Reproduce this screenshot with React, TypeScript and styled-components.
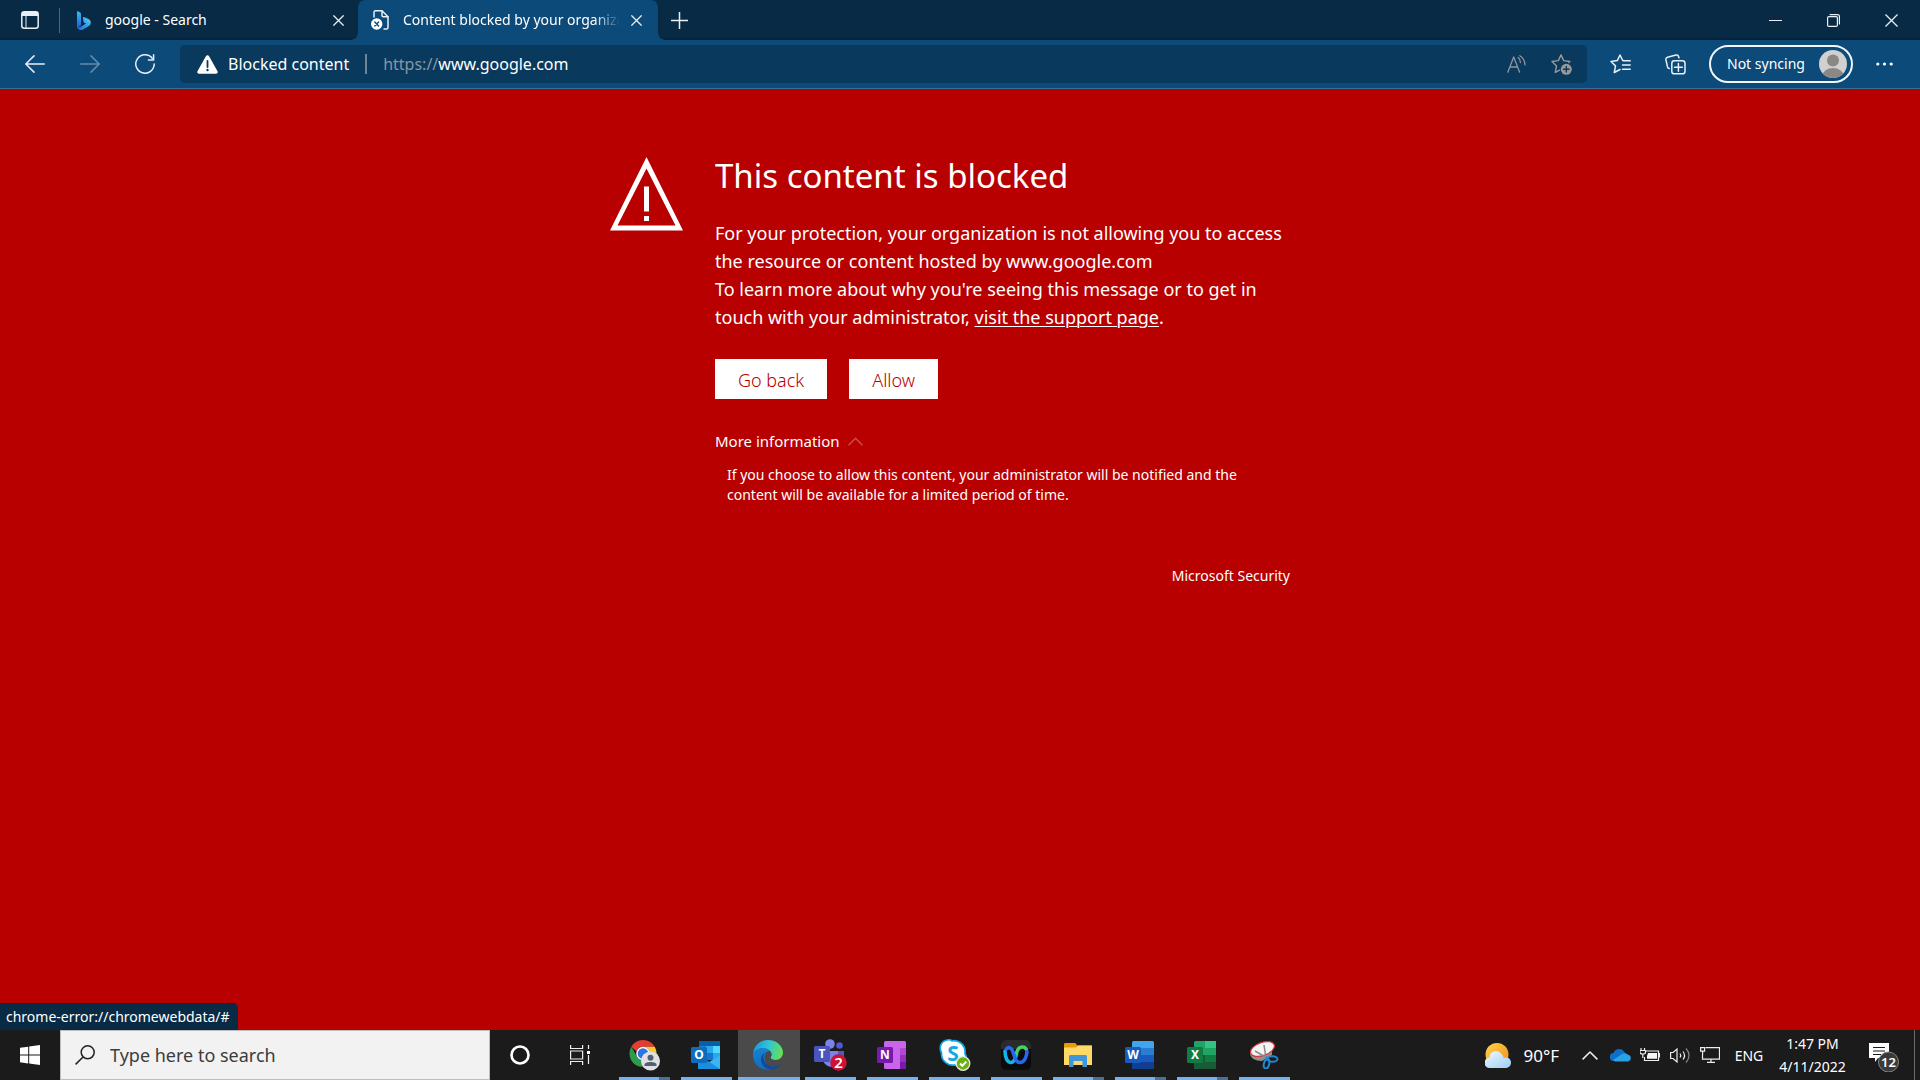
import React, { useState } from "react";
import styled, { createGlobalStyle, css } from "styled-components";

const color = {
  frame: "#082a45",
  toolbar: "#0c4a7a",
  field: "#0a395e",
  line: "#3a6e95",
  danger: "#b80000",
  taskbar: "#1b1b1b",
  underline: "#76b2ea",
};

const GlobalStyle = createGlobalStyle`
  *, *::before, *::after { box-sizing: border-box; }
  html, body { margin: 0; }
  body {
    background: ${color.danger};
    color: #fff;
    font-family: "Noto Sans", "Open Sans", sans-serif;
    font-size: 14px;
  }
  button, input { font: inherit; color: inherit; }
  svg { display: block; flex: none; }
`;

const Screen = styled.div`
  display: flex;
  flex-direction: column;
  min-height: 100vh;
`;

const PlainButton = styled.button`
  display: flex;
  align-items: center;
  justify-content: center;
  flex: none;
  padding: 0;
  border: 0;
  background: none;
  cursor: pointer;
`;

/* ---------- Title bar ---------- */

const TitleBar = styled.header`
  display: flex;
  height: 40px;
  background: ${color.frame};
  box-shadow: inset 0 -2px 2px -1px rgba(0, 0, 0, 0.35);
`;

const TabActions = styled(PlainButton)`
  width: 60px;
  position: relative;
  &::after {
    content: "";
    position: absolute;
    right: 0;
    top: 8px;
    width: 1px;
    height: 25px;
    background: #4d6579;
  }
`;

const Tabs = styled.div`
  display: flex;
`;

const Tab = styled.div<{ $active?: boolean }>`
  position: relative;
  display: flex;
  align-items: center;
  width: ${(p) => (p.$active ? 300 : 298)}px;
  padding: ${(p) => (p.$active ? "0 10px 0 13px" : "0 8px 0 17px")};
  ${(p) =>
    p.$active &&
    css`
      background: ${color.toolbar};
      border-radius: 7px 7px 0 0;
      &::before,
      &::after {
        content: "";
        position: absolute;
        bottom: 0;
        width: 6px;
        height: 6px;
      }
      &::before {
        right: 100%;
        background: radial-gradient(circle at 0 0, transparent 5px, ${color.toolbar} 6px);
      }
      &::after {
        left: 100%;
        background: radial-gradient(circle at 100% 0, transparent 5px, ${color.toolbar} 6px);
      }
    `}
`;

const TabLabel = styled(PlainButton)<{ $fade?: boolean }>`
  flex: 1;
  min-width: 0;
  justify-content: flex-start;
  gap: 14px;
  height: 40px;
  overflow: hidden;
  white-space: nowrap;
  line-height: 20px;
  ${(p) =>
    p.$fade &&
    css`
      mask-image: linear-gradient(to left, transparent 2px, #000 28px);
    `}
`;

const TabClose = styled(PlainButton)`
  width: 24px;
  height: 24px;
  margin-left: 2px;
`;

const NewTab = styled(PlainButton)`
  width: 42px;
`;

const WindowControls = styled.div`
  display: flex;
  margin-left: auto;
`;

const WindowButton = styled(PlainButton)`
  width: 58px;
`;

/* ---------- Toolbar ---------- */

const Toolbar = styled.nav`
  display: flex;
  align-items: center;
  height: 49px;
  padding: 0 8px 0 7px;
  background: ${color.toolbar};
  border-bottom: 1px solid ${color.line};
`;

const NavButton = styled(PlainButton)`
  width: 55px;
  height: 38px;
`;

const AddressBar = styled.div`
  display: flex;
  flex: 1;
  align-items: center;
  height: 38px;
  margin: 0 6px 0 8px;
  padding: 0 3px 0 17px;
  border-radius: 5px;
  background: ${color.field};
  font-size: 16px;
  line-height: 24px;
`;

const SiteState = styled(PlainButton)`
  gap: 10px;
  padding-right: 16px;
`;

const Scheme = styled.label`
  margin-left: 16px;
  color: #8796a3;
`;

const FieldRule = styled.span`
  width: 2px;
  height: 20px;
  background: #6f8699;
`;

const UrlInput = styled.input`
  flex: 1;
  min-width: 0;
  padding: 0;
  border: 0;
  outline: 0;
  background: none;
`;

const FieldButton = styled(PlainButton)`
  width: 45px;
  height: 38px;
`;

const Profile = styled(PlainButton)`
  height: 38px;
  width: 144px;
  padding: 0 4px 0 16px;
  margin: 0 4px 0 6px;
  justify-content: space-between;
  border: 2px solid #f2f6fa;
  border-radius: 19px;
  line-height: 20px;
`;

/* ---------- Blocked page ---------- */

const Page = styled.main`
  flex: 1;
  display: flex;
  flex-direction: column;
  padding-top: 64px;
  background: ${color.danger};
`;

const Notice = styled.section`
  display: grid;
  grid-template-columns: 73px 1fr;
  column-gap: 32px;
  width: 100%;
  max-width: 700px;
  margin: 0 auto;
  svg.warn {
    margin-top: 4px;
  }
`;

const Title = styled.h1`
  margin: 0 0 20px;
  font-size: 33px;
  font-weight: 400;
  line-height: 46px;
`;

const Lead = styled.p`
  margin: 0;
  font-size: 18px;
  line-height: 28px;
`;

const SupportLink = styled.a`
  color: inherit;
  text-underline-offset: 2px;
  text-decoration-thickness: 1px;
`;

const Actions = styled.div`
  display: flex;
  gap: 22px;
  margin: 28px 0 30px;
`;

const ActionButton = styled.button`
  height: 40px;
  padding: 1px 23px 0;
  border: 0;
  background: #fff;
  color: ${color.danger};
  font-size: 18px;
  font-weight: 300;
  line-height: 28px;
  cursor: pointer;
`;

const MoreButton = styled(PlainButton)`
  gap: 8px;
  font-size: 15px;
  line-height: 24px;
`;

const Detail = styled.p`
  margin: 12px 48px 0 12px;
  line-height: 20px;
`;

const Brand = styled.p`
  margin: 61px 20px 0 0;
  line-height: 20px;
  text-align: right;
`;

const StatusBubble = styled.output`
  align-self: flex-start;
  margin-top: auto;
  height: 27px;
  padding: 0 8px 0 6px;
  border-radius: 0 5px 0 0;
  background: ${color.frame};
  line-height: 28px;
`;

/* ---------- Taskbar ---------- */

const Taskbar = styled.footer`
  display: flex;
  height: 50px;
  background: ${color.taskbar};
`;

const SystemButton = styled(PlainButton)`
  width: 60px;
`;

const SearchBox = styled.label`
  display: flex;
  align-items: center;
  gap: 15px;
  width: 430px;
  padding-left: 14px;
  border: 1px solid #bdbdbd;
  background: #f2f2f2;
  color: #333;
`;

const SearchInput = styled.input`
  flex: 1;
  min-width: 0;
  padding: 0;
  border: 0;
  outline: 0;
  background: none;
  font-size: 18px;
  line-height: 24px;
  &::placeholder {
    color: #3c3c3c;
    opacity: 1;
  }
`;

const Apps = styled.div`
  display: flex;
  margin-left: 4px;
`;

const AppButton = styled(PlainButton)<{ $active?: boolean; $stacked?: boolean }>`
  position: relative;
  width: 62px;
  padding-right: 2px;
  ${(p) =>
    p.$active &&
    css`
      background: #4a4a4a;
    `}
  &::after {
    content: "";
    position: absolute;
    bottom: 0;
    left: ${(p) => (p.$active ? 0 : 5)}px;
    right: ${(p) => (p.$active ? 0 : 6)}px;
    height: 3px;
    background: ${(p) =>
      p.$stacked
        ? `linear-gradient(to right, ${color.underline} 40px, #4a7096 40px)`
        : color.underline};
  }
`;

const Tray = styled.div`
  display: flex;
  align-items: center;
  margin-left: auto;
  font-size: 14px;
  line-height: 23px;
`;

const Weather = styled(PlainButton)`
  gap: 12px;
  margin-right: 16px;
  font-size: 17px;
`;

const TrayButton = styled(PlainButton)`
  width: 30px;
  height: 50px;
`;

const Language = styled(PlainButton)`
  width: 48px;
`;

const Clock = styled.time`
  width: 79px;
  text-align: center;
`;

const Notifications = styled(PlainButton)`
  width: 63px;
  height: 50px;
  border-right: 1px solid #6a6a6a;
  margin-right: 5px;
`;

/* ---------- Icons ---------- */

const stroke = {
  fill: "none",
  stroke: "#e9eff5",
  strokeWidth: 1.5,
  strokeLinecap: "round" as const,
  strokeLinejoin: "round" as const,
};

const CrossIcon = ({ size = 11, thin = false }: { size?: number; thin?: boolean }) => (
  <svg width={size} height={size} viewBox="0 0 11 11" {...stroke} strokeWidth={thin ? 1.1 : 1.3} strokeLinecap="butt">
    <path d="M.4.4l10.2 10.2M10.6.4L.4 10.6" />
  </svg>
);

const TabActionsIcon = () => (
  <svg width="18" height="18" viewBox="0 0 18 18" {...stroke}>
    <rect x=".8" y=".8" width="16.4" height="16.4" rx="2.5" />
    <path d="M1 3h16" strokeWidth="4" strokeLinecap="butt" />
    <path d="M5 5v12" strokeWidth="1" />
  </svg>
);

const BingIcon = () => (
  <svg width="14" height="19" viewBox="0 0 14 19">
    <defs>
      <linearGradient id="bingStem" x1="0" y1="0" x2="0" y2="1">
        <stop offset="0" stopColor="#35c3f3" />
        <stop offset="1" stopColor="#1b5fd9" />
      </linearGradient>
      <linearGradient id="bingBowl" x1="0" y1="1" x2="1" y2="0">
        <stop offset="0" stopColor="#1e5fe0" />
        <stop offset="1" stopColor="#4fd8f0" />
      </linearGradient>
    </defs>
    <path d="M0 .8C0 .2.5 0 1 .3l2.4 1.5c.4.3.6.7.6 1.2v11.6L0 16.600z" fill="url(#bingStem)" />
    <path d="M6 7c-.3-.7.2-1.200.9-.9l4.600 2c1.500.700 2.300 2 2.300 3.400 0 1.600-.8 2.800-2 3.500l-5.600 3.400c-2.600 1.300-6.200.1-6.200-3.200 1 1.400 2.900 1.200 4.200.4l4.900-3-1.600-.7c-.5-.2-.8-.5-1-1z" fill="url(#bingBowl)" />
  </svg>
);

const BlockedPageIcon = () => (
  <svg width="18" height="20" viewBox="0 0 18 20" {...stroke}>
    <path d="M3 7V2.500C3 1.500 3.600.8 4.600.8H11l6 6v10.600c0 1-.7 1.700-1.700 1.700H13" />
    <path d="M11 1v4.500c0 .8.500 1.300 1.300 1.300H17" />
    <circle cx="5.700" cy="14" r="5.700" fill="#fff" stroke="none" />
    <path d="M3.800 12.100l3.800 3.800m0-3.800l-3.800 3.800" stroke="#0c4a7a" strokeWidth="1.400" />
  </svg>
);

const PlusIcon = () => (
  <svg width="17" height="17" viewBox="0 0 17 17" {...stroke} strokeLinecap="butt">
    <path d="M8.500 0v17M0 8.500h17" />
  </svg>
);

const MinimizeIcon = () => (
  <svg width="13" height="13" viewBox="0 0 13 13" {...stroke} strokeWidth="1" strokeLinecap="butt">
    <path d="M0 6.500h13" />
  </svg>
);

const RestoreIcon = () => (
  <svg width="13" height="13" viewBox="0 0 13 13" {...stroke} strokeWidth="1.200">
    <rect x=".6" y="2.600" width="9.800" height="9.800" rx="1.200" />
    <path d="M3 .6h7.500c1.200 0 1.900.8 1.900 1.900V10" />
  </svg>
);

const ArrowIcon = ({ forward = false }: { forward?: boolean }) => (
  <svg width="20" height="18" viewBox="0 0 20 18" {...stroke} opacity={forward ? 0.4 : 1}>
    <path d={forward ? "M.8 9h18M11 .9L19.200 9 11 17.100" : "M19.200 9H1M9 .9L.8 9 9 17.100"} />
  </svg>
);

const RefreshIcon = () => (
  <svg width="20" height="20" viewBox="0 0 20 20" {...stroke}>
    <path d="M17.200 4.300A9.200 9.200 0 1 0 19.200 10" />
    <path d="M18.600.8v5.200h-5.200" />
  </svg>
);

const SolidWarningIcon = () => (
  <svg width="21" height="19" viewBox="0 0 21 19">
    <path d="M8.900 1.200c.7-1.300 2.500-1.300 3.200 0l8.400 15c.7 1.200-.2 2.600-1.500 2.600H2c-1.300 0-2.200-1.400-1.500-2.600z" fill="#fff" />
    <path d="M10.500 6v6" stroke="#0a395e" strokeWidth="1.800" strokeLinecap="round" />
    <circle cx="10.500" cy="15" r="1.200" fill="#0a395e" />
  </svg>
);

const ReadAloudIcon = () => (
  <svg width="19" height="18" viewBox="0 0 19 18" {...stroke} stroke="#8d979f" strokeWidth="1.300">
    <path d="M.8 17.200L6.700 2l5.900 15.200M2.800 12h7.800" />
    <path d="M11.200 2.600c1.400 1.100 2.200 2.900 2.200 4.900M12.800.8c3 1.900 5 5.200 5.200 9" />
  </svg>
);

const AddFavoriteIcon = () => (
  <svg width="21" height="21" viewBox="0 0 21 21" {...stroke} stroke="#999" strokeWidth="1.400">
    <path d="M17.800 8.500l1-1-6.100-.9L10 .9 7.300 6.600 1 7.500l4.500 4.400-1.200 6.500 4.200-2.300" />
    <circle cx="15.300" cy="15.300" r="5.500" fill="#999" stroke="none" />
    <path d="M15.300 12.500v5.600M12.500 15.300h5.600" stroke="#0a395e" />
  </svg>
);

const FavoritesIcon = () => (
  <svg width="21" height="20" viewBox="0 0 21 20" {...stroke}>
    <path d="M13.400 6.500h-.7L10 1 7.300 6.600 1 7.500l4.500 4.400-1.200 6.600 5.700-3" />
    <path d="M13.500 6.700h6.700M12.500 11h7.700M12.500 15.300h7.700" />
  </svg>
);

const CollectionsIcon = () => (
  <svg width="21" height="21" viewBox="0 0 21 21" {...stroke}>
    <rect x="6.800" y="6.800" width="13.200" height="13" rx="2.600" />
    <path d="M13.400 9.500v7.700M9.500 13.300h7.800" />
    <path d="M4.300 14.500c-1-.2-1.500-.7-1.800-1.600L.9 5.700C.7 4.500 1.300 3.500 2.500 3.200L11 1c1.300-.3 2.300.4 2.600 1.500l.3 1.300" />
  </svg>
);

const AvatarIcon = () => (
  <svg width="28" height="28" viewBox="0 0 28 28">
    <clipPath id="avatarClip"><circle cx="14" cy="14" r="14" /></clipPath>
    <g clipPath="url(#avatarClip)">
      <rect width="28" height="28" fill="#d0d0d0" />
      <circle cx="14" cy="10.500" r="6" fill="#8b8784" />
      <ellipse cx="14" cy="26" rx="10.500" ry="8" fill="#8b8784" />
    </g>
  </svg>
);

const EllipsisIcon = () => (
  <svg width="17" height="4" viewBox="0 0 17 4" fill="#fff">
    <circle cx="1.800" cy="2" r="1.600" /><circle cx="8.500" cy="2" r="1.600" /><circle cx="15.200" cy="2" r="1.600" />
  </svg>
);

const WarningIcon = () => (
  <svg className="warn" width="73" height="74" viewBox="0 0 73 74" fill="#fff">
    <path fillRule="evenodd" d="M36.500 0L73 73.500H0zM36.500 11.500L7.500 68.500h58z" />
    <path d="M34 29.500h5v25h-5zM34 59h5v5h-5z" />
  </svg>
);

const ChevronUp = ({ width, height, tint }: { width: number; height: number; tint: string }) => (
  <svg width={width} height={height} viewBox="0 0 16 9" {...stroke} stroke={tint} strokeLinecap="butt">
    <path d="M.6 8.400L8 1l7.400 7.400" />
  </svg>
);

const WindowsIcon = () => (
  <svg width="20" height="20" viewBox="0 0 20 20" fill="#fff">
    <path d="M0 2.800L8.200 1.700v7.800H0zM9.200 1.500L20 0v9.500H9.200zM0 10.500h8.200v7.900L0 17.200zM9.200 10.500H20V20L9.200 18.500z" />
  </svg>
);

const SearchIcon = () => (
  <svg width="20" height="20" viewBox="0 0 20 20" fill="none" stroke="#222" strokeWidth="1.500">
    <circle cx="12.700" cy="7.300" r="6.500" /><path d="M8 12L.6 19.400" />
  </svg>
);

const CortanaIcon = () => (
  <svg width="20" height="20" viewBox="0 0 20 20" fill="none" stroke="#fff" strokeWidth="2.600"><circle cx="10" cy="10" r="8.500" /></svg>
);

const TaskViewIcon = () => (
  <svg width="20" height="20" viewBox="0 0 20 20" fill="none" stroke="#eee" strokeWidth="1.200">
    <path d="M.6 0v3.500h12V0M.6 20v-3.500h12V20M.6 6h12v8h-12zM18.500 0v4M18.500 10v9" />
    <path d="M17 6h3v3h-3z" fill="#fff" stroke="none" />
  </svg>
);

const ChromeIcon = () => (
  <svg width="34" height="32" viewBox="-2 0 34 32">
    <path d="M14 1a13.500 13.500 0 0 1 11.700 6.800H14a6.800 6.800 0 0 0-6.500 4.800L2.300 7.800A13.500 13.500 0 0 1 14 1z" fill="#e53e30" />
    <path d="M2.300 7.800l6 10.200a6.800 6.800 0 0 0 7.500 3.100L12.500 28A13.500 13.500 0 0 1 2.300 7.800z" fill="#2c9b4b" />
    <path d="M14 7.800h11.700A13.500 13.500 0 0 1 13.500 28l6-10A6.800 6.800 0 0 0 14 7.800z" fill="#fcc934" />
    <circle cx="14" cy="14.500" r="6.700" fill="#fff" /><circle cx="14" cy="14.500" r="5.300" fill="#2b74e4" />
    <circle cx="21.500" cy="22" r="9.500" fill="#dfe1e5" />
    <circle cx="21.500" cy="18.800" r="3" fill="#52606f" /><path d="M15.500 27v-1.500c0-3.500 12-3.500 12 0V27z" fill="#52606f" />
  </svg>
);

type OfficeProps = { letter: string; badge: string; children: React.ReactNode };

const OfficeIcon = ({ letter, badge, children }: OfficeProps) => (
  <svg width="30" height="28" viewBox="0 0 30 28">
    {children}
    <rect x="0" y="6" width="16" height="16" rx="1.500" fill={badge} />
    <text x="8" y="18" textAnchor="middle" fontSize="12" fontWeight="700" fill="#fff">{letter}</text>
  </svg>
);

const OutlookIcon = () => (
  <OfficeIcon letter="O" badge="#0f6cbd">
    <path d="M8 0h21v14H8z" fill="#0a5ea8" /><path d="M8 5h7v7H8z" fill="#1a86d9" /><path d="M15 5h7v7h-7z" fill="#28a8ea" /><path d="M22 5h7v7h-7z" fill="#50d9ff" />
    <path d="M15 12h7v7h-7z" fill="#0f78d4" /><path d="M22 12h7v7h-7z" fill="#28a8ea" />
    <path d="M7 14l11.500 7L29 14v14H7z" fill="#1a8fe0" /><path d="M29 14v14L18.500 21z" fill="#3cb4f0" />
  </OfficeIcon>
);

const EdgeIcon = () => (
  <svg width="30" height="30" viewBox="0 0 30 30">
    <defs>
      <linearGradient id="edgeTop" x1="0" y1=".3" x2="1" y2=".5">
        <stop offset="0" stopColor="#1c94dc" /><stop offset=".5" stopColor="#32c5d4" /><stop offset="1" stopColor="#66e052" />
      </linearGradient>
      <linearGradient id="edgeBody" x1="0" y1="0" x2="0" y2="1">
        <stop offset="0" stopColor="#1783cf" /><stop offset="1" stopColor="#0f6cc0" />
      </linearGradient>
    </defs>
    <path d="M0 14C.5 6 7 0 15 0c9 0 15 6.500 15 12.500 0 4.500-3.500 7.500-7.500 7.500-3.500 0-5-1.300-5-2.300 0-.8 1-1.200 1-3.200 0-3-3-6-7.500-6C6 8.500 1 11 0 14z" fill="url(#edgeTop)" />
    <path d="M0 14c1-3.500 5-6 9.500-6 4 0 6 1.500 7.500 3-3.500 0-5.500 3-5.500 6.500 0 6 5 12 11 10.500-2.200 1.300-4.800 2-7.500 2C6 30 0 23 0 15z" fill="url(#edgeBody)" />
    <path d="M12 12.500c-2.500 3-2 8 1.500 11.500 3.500 3.200 9 3.300 14.300.3-2 3-5 4.900-8.300 5.500C12 30 8 24.500 8 19.500c0-3 1.500-5.500 4-7z" fill="#114b9a" />
    <path d="M17 11c-3 .2-5 2.500-5 5.500 0 4 3.500 7 8 7 3 0 5.500-.8 7.500-2-1.500 0-3.500.3-5.500-1.500-3 0-4.500-1.300-4.500-2.300 0-.8 1-1.200 1-3.200 0-1.300-.5-2.500-1.500-3.500z" fill="#4a4a4a" />
  </svg>
);

const TeamsIcon = () => (
  <svg width="36" height="32" viewBox="-2 0 36 32">
    <circle cx="16" cy="5" r="4.800" fill="#7b83eb" /><circle cx="25.500" cy="6.500" r="3.300" fill="#5059c9" />
    <path d="M21 12h9v8c0 4-3 6-6 5z" fill="#5059c9" /><path d="M9 12h15v9c0 9-13 9-15 0z" fill="#7b83eb" />
    <rect y="7" width="16" height="16" rx="1.500" fill="#4b53bc" />
    <text x="8" y="19" textAnchor="middle" fontSize="12" fontWeight="700" fill="#fff">T</text>
    <circle cx="24.500" cy="23.500" r="8.300" fill="#cf1234" />
    <text x="24.500" y="29" textAnchor="middle" fontSize="15" fontWeight="600" fill="#fff">2</text>
  </svg>
);

const OneNoteIcon = () => (
  <OfficeIcon letter="N" badge="#7719aa">
    <rect x="7" width="22" height="28" rx="1.500" fill="#ca64ea" /><path d="M23 7h6v7h-6z" fill="#ae4bd5" /><path d="M23 14h6v7h-6z" fill="#9332bf" /><path d="M23 21h6v7h-6z" fill="#7719aa" />
  </OfficeIcon>
);

const SkypeIcon = () => (
  <svg width="34" height="32" viewBox="-2 0 34 32">
    <path d="M8 1c2-.5 4 0 5 .800C21 .8 27 7 26 14.500c2 4 1.500 8-1.500 10.500-3 2.500-7 2-9 1C8 27 2 21 2.500 14 0 9 1 2.500 8 1z" fill="#fff" stroke="#0fa5e5" strokeWidth="1.700" />
    <text x="14" y="21.500" textAnchor="middle" fontSize="21" fontWeight="700" fill="#13a8e6">S</text>
    <circle cx="24" cy="24.500" r="6.800" fill="#6bb20c" stroke="#e8e8e8" strokeWidth="1.300" />
    <path d="M21 24.500l2.300 2.300 4-4.200" stroke="#fff" strokeWidth="2" fill="none" />
  </svg>
);

const WebexIcon = () => (
  <svg width="30" height="30" viewBox="0 0 30 30" fill="none" strokeWidth="3.600" strokeLinecap="round">
    <rect width="30" height="30" rx="5" fill="#0b0b0d" /><path d="M0 9V5a5 5 0 0 1 5-5h20a5 5 0 0 1 5 5v4z" fill="#2b2b2d" />
    <path d="M4 11c0 7 2.500 11.500 6 11.500 3 0 4.500-4 5.500-8" stroke="#12b5e8" />
    <path d="M15.500 13c1-4 3-6 6-6 1.800 0 3 .8 3.700 2.300" stroke="#3fd75a" />
    <path d="M5.500 9c2-2.500 5-1.500 6.500 3l2 6c1.200 3.500 3 4.500 5 4.500 4 0 6.500-5 7-11" stroke="#2868ee" />
  </svg>
);

const ExplorerIcon = () => (
  <svg width="28" height="24" viewBox="0 0 28 24">
    <path d="M0 1.500C0 .7.500 0 1.300 0h10l2 2.500h13.200c.8 0 1.500.6 1.500 1.500V22H0z" fill="#e69b0b" />
    <path d="M0 4.500h12l2-2h14V22H0z" fill="#ffd965" />
    <path d="M5 24V13.500C5 12.700 5.700 12 6.500 12h15c.8 0 1.500.7 1.500 1.500V24h-4.500v-6h-9v6z" fill="#3f96d8" />
  </svg>
);

const WordIcon = () => (
  <OfficeIcon letter="W" badge="#185abd">
    <rect x="7" width="22" height="28" rx="1.500" fill="#41a5ee" /><path d="M7 7h22v7H7z" fill="#2b7cd3" /><path d="M7 14h22v7H7z" fill="#185abd" /><path d="M7 21h22v7H7z" fill="#103f91" />
  </OfficeIcon>
);

const ExcelIcon = () => (
  <OfficeIcon letter="X" badge="#107c41">
    <rect x="7" width="22" height="28" rx="1.500" fill="#21a366" /><path d="M18 0h11v7H18z" fill="#33c481" /><path d="M18 7h11v7H18z" fill="#21a366" /><path d="M7 14h11v7H7z" fill="#185c37" /><path d="M18 14h11v7H18z" fill="#107c41" /><path d="M7 21h22v7H7z" fill="#185c37" />
  </OfficeIcon>
);

const SnipIcon = () => (
  <svg width="30" height="28" viewBox="0 0 30 28">
    <path d="M1 12c0 5 5 8 12 8l10-6V9z" fill="#8f8f8f" />
    <ellipse cx="13.500" cy="8" rx="12.500" ry="6.500" transform="rotate(-20 13.500 8)" fill="#f4f4f4" stroke="#d13434" strokeWidth="1.200" />
    <path d="M15 4l2 13M6 10l12 7" stroke="#8a8a8a" strokeWidth="1.500" />
    <g fill="none" stroke="#1e88d0" strokeWidth="2"><ellipse cx="23.500" cy="18" rx="5" ry="2.800" /><ellipse cx="17.500" cy="23" rx="2.600" ry="4.500" transform="rotate(15 17.500 23)" /><path d="M17 16l4 4" /></g>
  </svg>
);

const WeatherIcon = () => (
  <svg width="26" height="25" viewBox="0 0 26 25">
    <defs>
      <linearGradient id="sun" x1="0" y1="0" x2="1" y2="1"><stop offset="0" stopColor="#ffd54a" /><stop offset="1" stopColor="#f08c1c" /></linearGradient>
      <linearGradient id="cloud" x1="0" y1="0" x2="1" y2="1"><stop offset="0" stopColor="#f2f9ff" /><stop offset="1" stopColor="#9bcdf3" /></linearGradient>
    </defs>
    <circle cx="12" cy="11.500" r="11.500" fill="url(#sun)" />
    <path d="M5 25a5.200 5.200 0 0 1-.5-10.400A6.500 6.500 0 0 1 16.500 11c1.300 1 2 2.500 2.200 4C23 13.500 26 16 26 19.500c0 3.200-2.300 5.500-5.500 5.500z" fill="url(#cloud)" />
  </svg>
);

const OneDriveIcon = () => (
  <svg width="21" height="14" viewBox="0 0 21 14">
    <path d="M4 13a4 4 0 0 1-.5-8A6 6 0 0 1 14 3.500l1.500 2L8 13z" fill="#0f6fc6" />
    <path d="M5 13.500L3 12l9-6c2-1 4-1 5.500.5 4.500.5 4.500 7-.5 7z" fill="#28a3ea" />
  </svg>
);

const BatteryIcon = () => (
  <svg width="20" height="14" viewBox="0 0 20 14" fill="none" stroke="#eee" strokeWidth="1.200">
    <path d="M6 3h12.500v9.500h-14V9M18.500 5.500h1v4" /><path d="M8 5h9v5.800H7V8z" fill="#f4f4f4" stroke="none" />
    <path d="M1 0v2M4.500 0v2M0 2.500h5.500v2c0 2-5.500 2-5.500 0zM2.800 6v4" />
  </svg>
);

const SpeakerIcon = () => (
  <svg width="20" height="17" viewBox="0 0 20 17" fill="none" stroke="#eee" strokeWidth="1.200">
    <path d="M.6 5.500h2.500L7 2v13L3.100 11.500H.6z" /><path d="M10 6.500c1 1.300 1 2.700 0 4M13 4.500c2 2.600 2 5.400 0 8" /><path d="M16 1.500c4 4.200 4 9.800 0 14" stroke="#888" />
  </svg>
);

const NetworkIcon = () => (
  <svg width="20" height="16" viewBox="0 0 20 16" fill="none" stroke="#eee" strokeWidth="1.200">
    <path d="M5.500.6h14v11.500h-17V8M11 12v3M7 15.300h8" /><path d="M.6.6h4v3.600h-4zM2.600 4v4" />
  </svg>
);

const NotificationIcon = () => (
  <svg width="34" height="34" viewBox="0 0 34 34">
    <path d="M3 5h20v15H12l-3 4v-4H3z" fill="#fff" /><path d="M7 9.500h12M7 13h12M7 16.500h8" stroke="#1b1b1b" strokeWidth="1.200" />
    <circle cx="22.500" cy="24" r="10" fill="#3a3a3a" stroke="#858585" strokeWidth="1" />
    <text x="22.500" y="29" textAnchor="middle" fontSize="13" fontWeight="600" fill="#fff">12</text>
  </svg>
);

/* ---------- App ---------- */

const apps = [
  { name: "Chrome", icon: <ChromeIcon />, stacked: true },
  { name: "Outlook", icon: <OutlookIcon /> },
  { name: "Edge", icon: <EdgeIcon />, active: true },
  { name: "Teams", icon: <TeamsIcon /> },
  { name: "OneNote", icon: <OneNoteIcon /> },
  { name: "Skype", icon: <SkypeIcon /> },
  { name: "Webex", icon: <WebexIcon /> },
  { name: "File Explorer", icon: <ExplorerIcon />, stacked: true },
  { name: "Word", icon: <WordIcon />, stacked: true },
  { name: "Excel", icon: <ExcelIcon />, stacked: true },
  { name: "Snipping Tool", icon: <SnipIcon /> },
];

export default function App() {
  const [open, setOpen] = useState(true);
  const [url, setUrl] = useState("www.google.com");

  return (
    <Screen>
      <GlobalStyle />
      <TitleBar>
        <TabActions aria-label="Tab actions"><TabActionsIcon /></TabActions>
        <Tabs>
          <Tab>
            <TabLabel><BingIcon />google - Search</TabLabel>
            <TabClose aria-label="Close tab"><CrossIcon /></TabClose>
          </Tab>
          <Tab $active>
            <TabLabel $fade><BlockedPageIcon />Content blocked by your organization</TabLabel>
            <TabClose aria-label="Close tab"><CrossIcon /></TabClose>
          </Tab>
        </Tabs>
        <NewTab aria-label="New tab"><PlusIcon /></NewTab>
        <WindowControls>
          <WindowButton aria-label="Minimize"><MinimizeIcon /></WindowButton>
          <WindowButton aria-label="Restore"><RestoreIcon /></WindowButton>
          <WindowButton aria-label="Close"><CrossIcon size={13} thin /></WindowButton>
        </WindowControls>
      </TitleBar>

      <Toolbar>
        <NavButton aria-label="Back"><ArrowIcon /></NavButton>
        <NavButton aria-label="Forward" disabled><ArrowIcon forward /></NavButton>
        <NavButton aria-label="Refresh"><RefreshIcon /></NavButton>
        <AddressBar>
          <SiteState><SolidWarningIcon />Blocked content</SiteState>
          <FieldRule />
          <Scheme htmlFor="url">https://</Scheme>
          <UrlInput id="url" value={url} onChange={(e) => setUrl(e.target.value)} />
          <FieldButton aria-label="Read aloud"><ReadAloudIcon /></FieldButton>
          <FieldButton aria-label="Add to favorites"><AddFavoriteIcon /></FieldButton>
        </AddressBar>
        <NavButton aria-label="Favorites"><FavoritesIcon /></NavButton>
        <NavButton aria-label="Collections"><CollectionsIcon /></NavButton>
        <Profile>Not syncing<AvatarIcon /></Profile>
        <NavButton aria-label="Settings and more"><EllipsisIcon /></NavButton>
      </Toolbar>

      <Page>
        <Notice>
          <WarningIcon />
          <div>
            <Title>This content is blocked</Title>
            <Lead>
              For your protection, your organization is not allowing you to access
              <br />
              the resource or content hosted by www.google.com
              <br />
              To learn more about why you're seeing this message or to get in
              <br />
              touch with your administrator, <SupportLink href="#support">visit the support page</SupportLink>.
            </Lead>
            <Actions>
              <ActionButton>Go back</ActionButton>
              <ActionButton>Allow</ActionButton>
            </Actions>
            <MoreButton aria-expanded={open} onClick={() => setOpen(!open)}>
              More information
              <ChevronUp width={15} height={9} tint="#d04a4a" />
            </MoreButton>
            {open && (
              <Detail>
                If you choose to allow this content, your administrator will be notified and the content will be
                available for a limited period of time.
              </Detail>
            )}
            <Brand>Microsoft Security</Brand>
          </div>
        </Notice>
        <StatusBubble>chrome-error://chromewebdata/#</StatusBubble>
      </Page>

      <Taskbar>
        <SystemButton aria-label="Start"><WindowsIcon /></SystemButton>
        <SearchBox>
          <SearchIcon />
          <SearchInput aria-label="Search" placeholder="Type here to search" />
        </SearchBox>
        <SystemButton aria-label="Cortana"><CortanaIcon /></SystemButton>
        <SystemButton aria-label="Task view"><TaskViewIcon /></SystemButton>
        <Apps>
          {apps.map((a) => (
            <AppButton key={a.name} aria-label={a.name} $active={a.active} $stacked={a.stacked}>
              {a.icon}
            </AppButton>
          ))}
        </Apps>
        <Tray>
          <Weather><WeatherIcon />90°F</Weather>
          <TrayButton aria-label="Show hidden icons"><ChevronUp width={16} height={9} tint="#eee" /></TrayButton>
          <TrayButton aria-label="OneDrive"><OneDriveIcon /></TrayButton>
          <TrayButton aria-label="Battery"><BatteryIcon /></TrayButton>
          <TrayButton aria-label="Volume"><SpeakerIcon /></TrayButton>
          <TrayButton aria-label="Network"><NetworkIcon /></TrayButton>
          <Language>ENG</Language>
          <Clock>1:47 PM<br />4/11/2022</Clock>
          <Notifications aria-label="Notifications"><NotificationIcon /></Notifications>
        </Tray>
      </Taskbar>
    </Screen>
  );
}
